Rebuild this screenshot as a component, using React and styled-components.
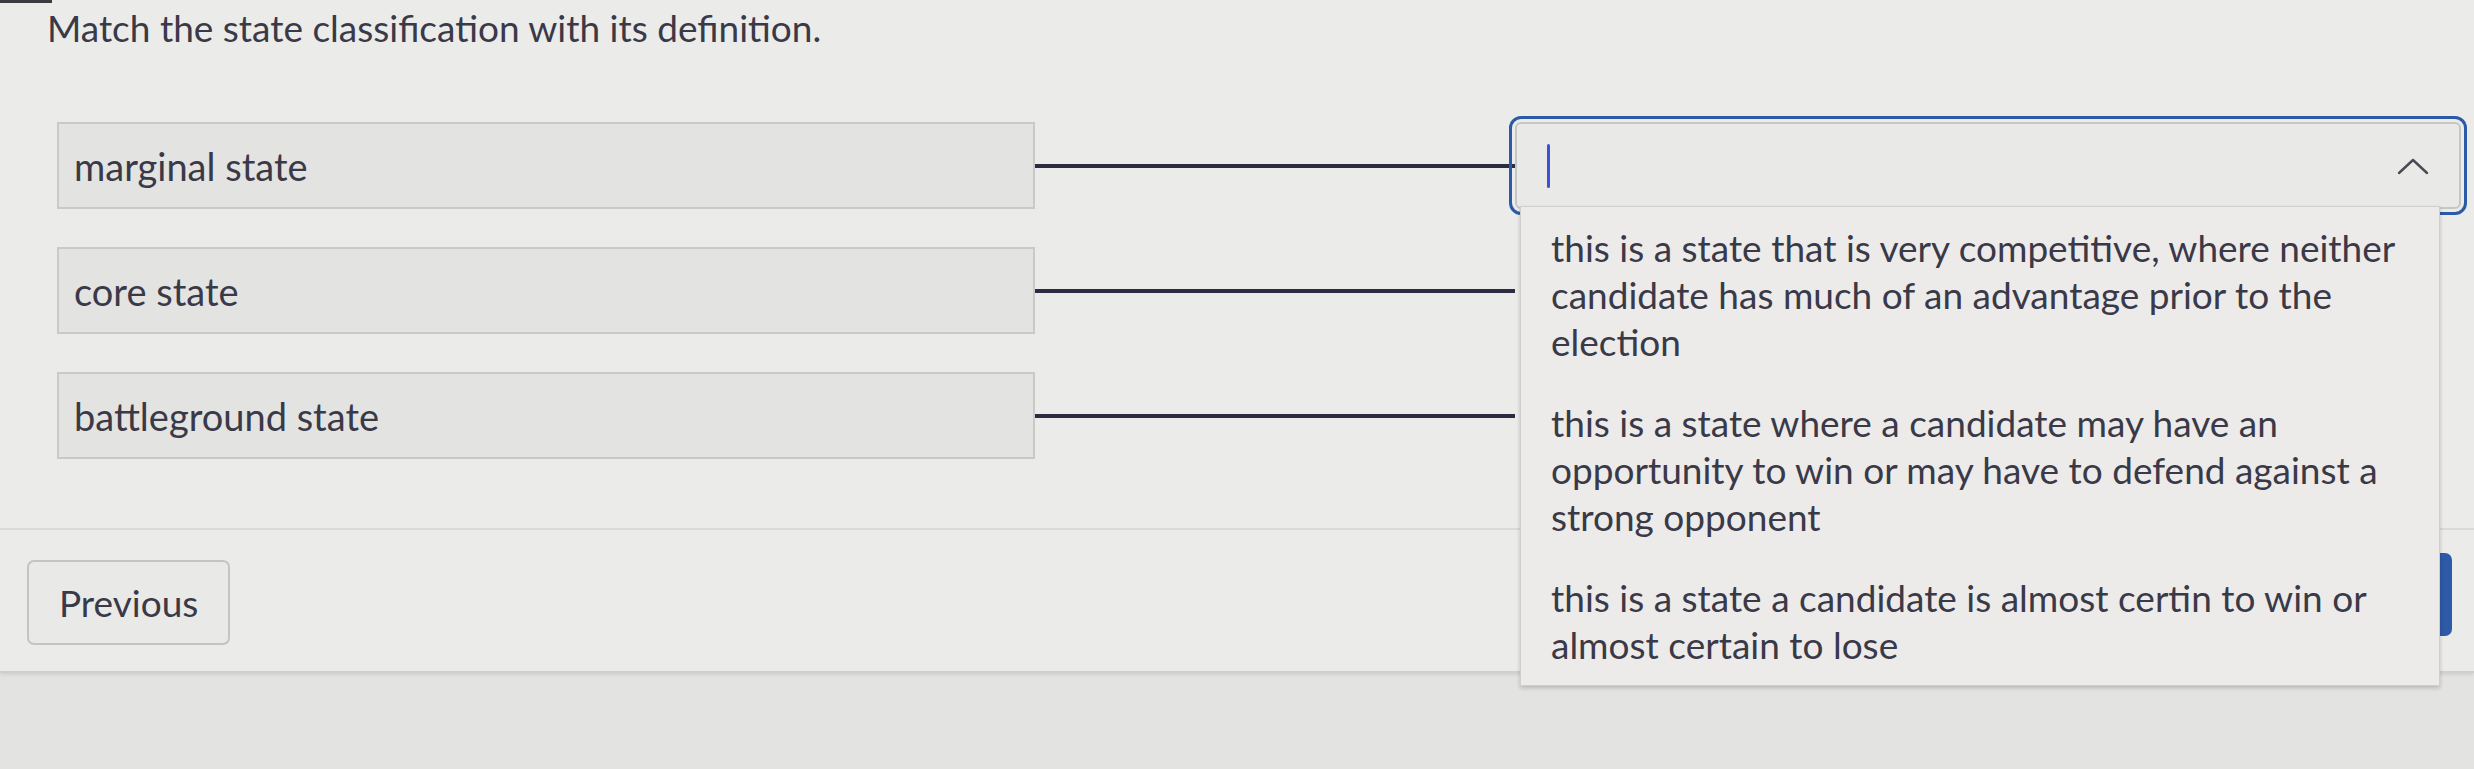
import React from "react";
import styled, { createGlobalStyle } from "styled-components";

const GlobalStyle = createGlobalStyle`
  html, body {
    margin: 0;
    padding: 0;
    background: #e3e3e1;
  }
  body {
    font-family: Lato, "Open Sans", "Liberation Sans", sans-serif;
    color: #3a3948;
  }
`;

const pairs = [
  { id: 1, label: "marginal state", open: true },
  { id: 2, label: "core state" },
  { id: 3, label: "battleground state" },
];

const options = [
  "this is a state that is very competitive, where neither candidate has much of an advantage prior to the election",
  "this is a state where a candidate may have an opportunity to win or may have to defend against a strong opponent",
  "this is a state a candidate is almost certin to win or almost certain to lose",
];

const ChevronUp = () => (
  <svg width="32" height="18" viewBox="0 0 32 18" fill="none">
    <path
      d="M2 16 L16 3 L30 16"
      stroke="#4a4a55"
      strokeWidth="2.4"
      strokeLinecap="round"
      strokeLinejoin="round"
    />
  </svg>
);

const App = () => {
  return (
    <Page>
      <GlobalStyle />
      <Panel>
        <ProgressMark />
        <Title>Match the state classification with its definition.</Title>

        <Matching>
          {pairs.map((pair) => (
            <Pair key={pair.id}>
              <LabelBox>{pair.label}</LabelBox>
              <Connector />
              <SelectWrap>
                {/* only the open dropdown is drawn, the list hides the others */}
                {pair.open && (
                  <>
                    <SelectBox $open>
                      <TextCaret />
                      <ChevronUp />
                    </SelectBox>
                    <OptionList>
                      {options.map((text) => (
                        <Option key={text}>{text}</Option>
                      ))}
                    </OptionList>
                  </>
                )}
              </SelectWrap>
            </Pair>
          ))}
        </Matching>

        <Footer>
          <Button>Previous</Button>
          <NextButton aria-hidden="true" />
        </Footer>
      </Panel>
    </Page>
  );
};

export default App;

const Page = styled.div`
  min-height: 100vh;
  background: #e3e3e1;
`;

const Panel = styled.div`
  position: relative;
  background: #ebebe9;
  border-bottom: 2px solid #cfcfcd;
  box-shadow: 0 2px 3px rgba(0, 0, 0, 0.08);
`;

const ProgressMark = styled.div`
  width: 52px;
  height: 3px;
  background: #3b3b40;
`;

const Title = styled.h1`
  margin: 3px 0 0 47px;
  font-size: 37px;
  font-weight: 400;
  line-height: 1.2;
  color: #3a3948;
`;

const Matching = styled.div`
  display: flex;
  flex-direction: column;
  gap: 38px;
  margin: 72px 0 0 57px;
`;

const Pair = styled.div`
  display: flex;
  align-items: center;
  height: 87px;
`;

const LabelBox = styled.div`
  box-sizing: border-box;
  width: 978px;
  height: 87px;
  display: flex;
  align-items: center;
  padding: 0 15px;
  background: #e3e3e1;
  border: 2px solid #c9c9c7;
  font-size: 38px;
  color: #3a3948;
`;

const Connector = styled.div`
  width: 480px;
  height: 4px;
  background: #2b2c42;
`;

const SelectWrap = styled.div`
  position: relative;
  width: 946px;
  height: 87px;
`;

const SelectBox = styled.div`
  box-sizing: border-box;
  height: 87px;
  display: flex;
  align-items: center;
  justify-content: space-between;
  padding: 0 30px 0 30px;
  background: #e9e9e7;
  border: 2px solid #c6c6c4;
  border-radius: 6px;
  outline: ${(p) => (p.$open ? "3px solid #2d5aa6" : "none")};
  outline-offset: 3px;
`;

const TextCaret = styled.span`
  display: block;
  width: 3px;
  height: 44px;
  border-radius: 2px;
  background: #3b52d4;
`;

const OptionList = styled.div`
  position: absolute;
  z-index: 2;
  top: calc(100% - 3px);
  left: 5px;
  width: 920px;
  box-sizing: border-box;
  background: #ecebea;
  border: 1px solid #cfcfcd;
  box-shadow: 0 2px 4px rgba(0, 0, 0, 0.2);
`;

const Option = styled.div`
  padding: 17px 30px;
  font-size: 37px;
  line-height: 47px;
  color: #3a3948;
`;

const Footer = styled.div`
  display: flex;
  justify-content: space-between;
  align-items: center;
  margin-top: 69px;
  padding: 30px 22px 26px 27px;
  border-top: 2px solid #dadad8;
`;

const Button = styled.button`
  box-sizing: border-box;
  height: 85px;
  padding: 0 30px;
  font-family: Lato, "Open Sans", "Liberation Sans", sans-serif;
  font-size: 37px;
  color: #3a3948;
  background: #e9e9e7;
  border: 2px solid #c4c4c2;
  border-radius: 7px;
`;

/* the "Next" button sits behind the open list; only its right edge shows */
const NextButton = styled.span`
  display: block;
  width: 160px;
  height: 83px;
  margin-top: -16px;
  border-radius: 7px;
  background: #2d5aa6;
`;
